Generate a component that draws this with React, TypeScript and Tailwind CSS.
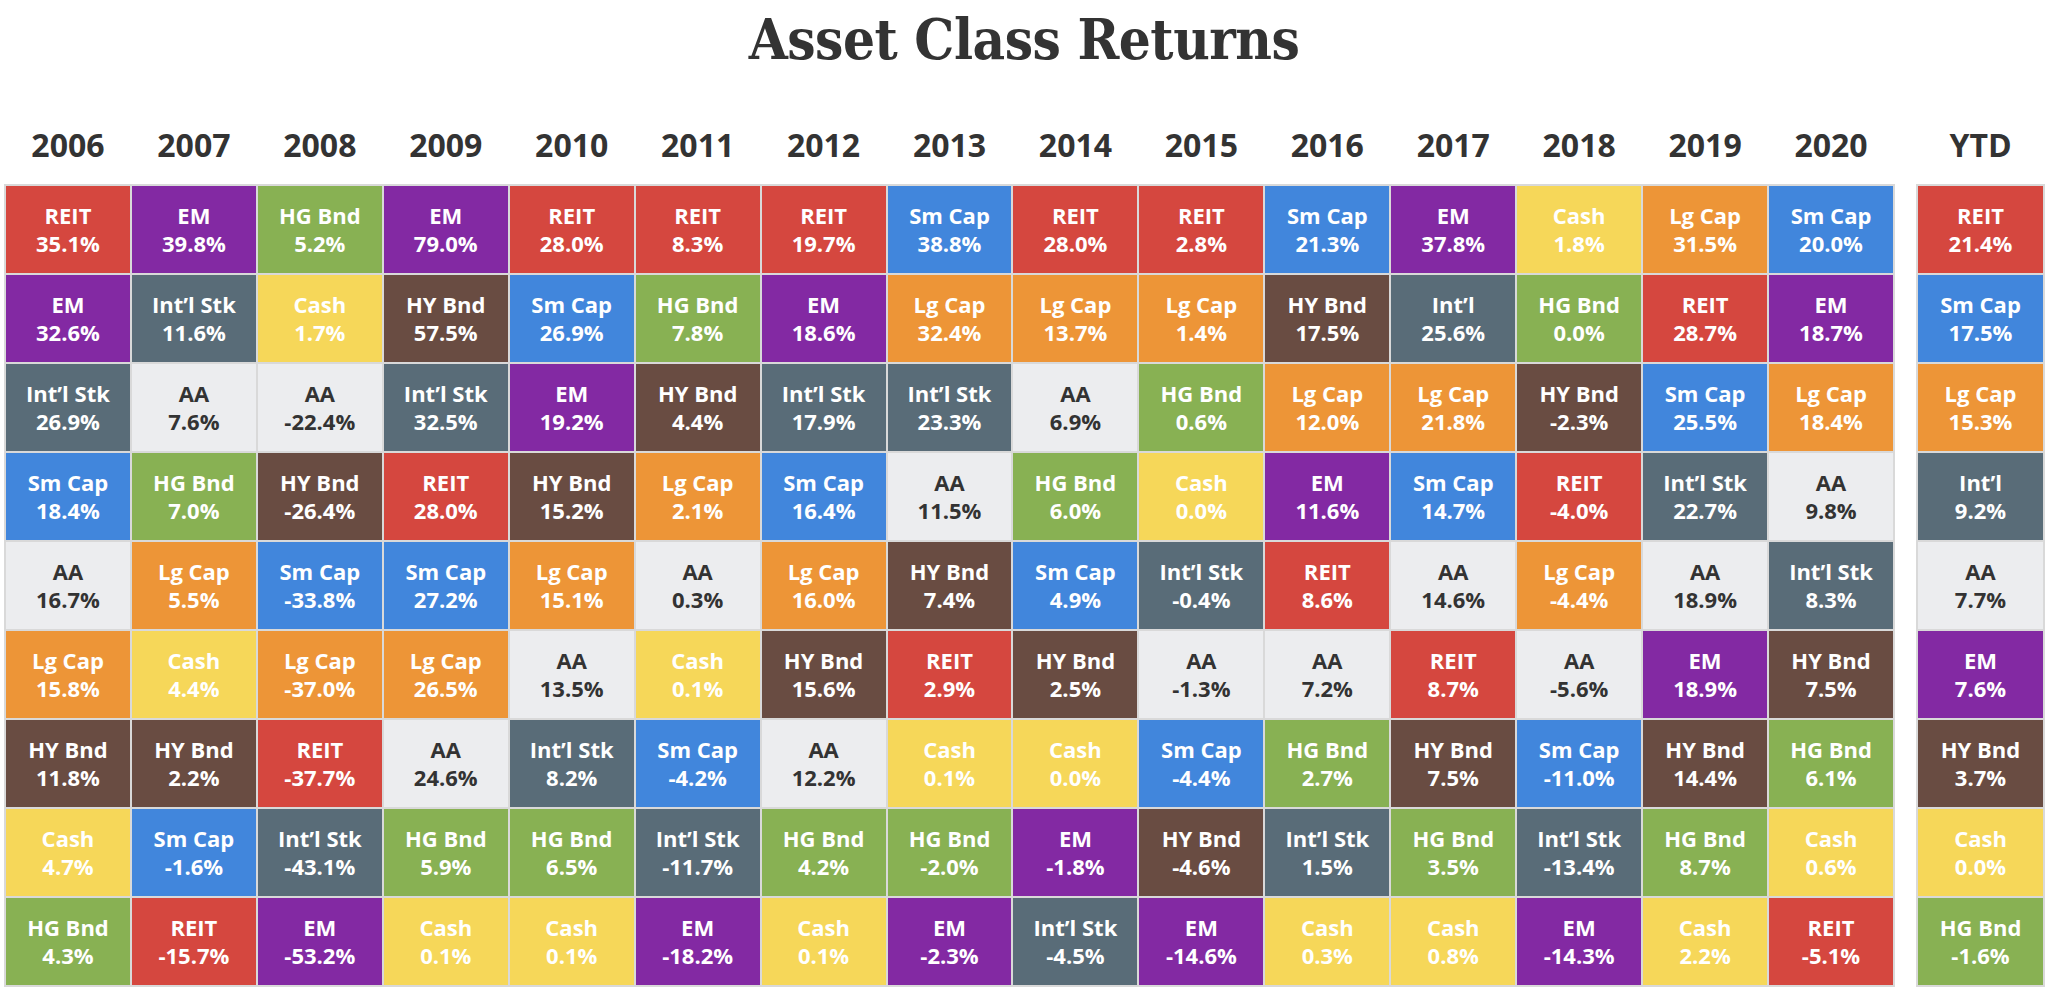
const COLORS: Record<string, string> = {
  "REIT": "bg-[#d5473f] text-white",
  "EM": "bg-[#8329a3] text-white",
  "HG Bnd": "bg-[#88b153] text-white",
  "Cash": "bg-[#f6d759] text-white",
  "Int’l Stk": "bg-[#596c78] text-white",
  "Int’l": "bg-[#596c78] text-white",
  "HY Bnd": "bg-[#694c42] text-white",
  "Sm Cap": "bg-[#4186dc] text-white",
  "Lg Cap": "bg-[#ed9537] text-white",
  "AA": "bg-[#ecedef] text-[#333333]",
};

type Cell = [string, string];

const years: { year: string; cells: Cell[] }[] = [
  { year: "2006", cells: [["REIT", "35.1%"], ["EM", "32.6%"], ["Int’l Stk", "26.9%"], ["Sm Cap", "18.4%"], ["AA", "16.7%"], ["Lg Cap", "15.8%"], ["HY Bnd", "11.8%"], ["Cash", "4.7%"], ["HG Bnd", "4.3%"]] },
  { year: "2007", cells: [["EM", "39.8%"], ["Int’l Stk", "11.6%"], ["AA", "7.6%"], ["HG Bnd", "7.0%"], ["Lg Cap", "5.5%"], ["Cash", "4.4%"], ["HY Bnd", "2.2%"], ["Sm Cap", "-1.6%"], ["REIT", "-15.7%"]] },
  { year: "2008", cells: [["HG Bnd", "5.2%"], ["Cash", "1.7%"], ["AA", "-22.4%"], ["HY Bnd", "-26.4%"], ["Sm Cap", "-33.8%"], ["Lg Cap", "-37.0%"], ["REIT", "-37.7%"], ["Int’l Stk", "-43.1%"], ["EM", "-53.2%"]] },
  { year: "2009", cells: [["EM", "79.0%"], ["HY Bnd", "57.5%"], ["Int’l Stk", "32.5%"], ["REIT", "28.0%"], ["Sm Cap", "27.2%"], ["Lg Cap", "26.5%"], ["AA", "24.6%"], ["HG Bnd", "5.9%"], ["Cash", "0.1%"]] },
  { year: "2010", cells: [["REIT", "28.0%"], ["Sm Cap", "26.9%"], ["EM", "19.2%"], ["HY Bnd", "15.2%"], ["Lg Cap", "15.1%"], ["AA", "13.5%"], ["Int’l Stk", "8.2%"], ["HG Bnd", "6.5%"], ["Cash", "0.1%"]] },
  { year: "2011", cells: [["REIT", "8.3%"], ["HG Bnd", "7.8%"], ["HY Bnd", "4.4%"], ["Lg Cap", "2.1%"], ["AA", "0.3%"], ["Cash", "0.1%"], ["Sm Cap", "-4.2%"], ["Int’l Stk", "-11.7%"], ["EM", "-18.2%"]] },
  { year: "2012", cells: [["REIT", "19.7%"], ["EM", "18.6%"], ["Int’l Stk", "17.9%"], ["Sm Cap", "16.4%"], ["Lg Cap", "16.0%"], ["HY Bnd", "15.6%"], ["AA", "12.2%"], ["HG Bnd", "4.2%"], ["Cash", "0.1%"]] },
  { year: "2013", cells: [["Sm Cap", "38.8%"], ["Lg Cap", "32.4%"], ["Int’l Stk", "23.3%"], ["AA", "11.5%"], ["HY Bnd", "7.4%"], ["REIT", "2.9%"], ["Cash", "0.1%"], ["HG Bnd", "-2.0%"], ["EM", "-2.3%"]] },
  { year: "2014", cells: [["REIT", "28.0%"], ["Lg Cap", "13.7%"], ["AA", "6.9%"], ["HG Bnd", "6.0%"], ["Sm Cap", "4.9%"], ["HY Bnd", "2.5%"], ["Cash", "0.0%"], ["EM", "-1.8%"], ["Int’l Stk", "-4.5%"]] },
  { year: "2015", cells: [["REIT", "2.8%"], ["Lg Cap", "1.4%"], ["HG Bnd", "0.6%"], ["Cash", "0.0%"], ["Int’l Stk", "-0.4%"], ["AA", "-1.3%"], ["Sm Cap", "-4.4%"], ["HY Bnd", "-4.6%"], ["EM", "-14.6%"]] },
  { year: "2016", cells: [["Sm Cap", "21.3%"], ["HY Bnd", "17.5%"], ["Lg Cap", "12.0%"], ["EM", "11.6%"], ["REIT", "8.6%"], ["AA", "7.2%"], ["HG Bnd", "2.7%"], ["Int’l Stk", "1.5%"], ["Cash", "0.3%"]] },
  { year: "2017", cells: [["EM", "37.8%"], ["Int’l", "25.6%"], ["Lg Cap", "21.8%"], ["Sm Cap", "14.7%"], ["AA", "14.6%"], ["REIT", "8.7%"], ["HY Bnd", "7.5%"], ["HG Bnd", "3.5%"], ["Cash", "0.8%"]] },
  { year: "2018", cells: [["Cash", "1.8%"], ["HG Bnd", "0.0%"], ["HY Bnd", "-2.3%"], ["REIT", "-4.0%"], ["Lg Cap", "-4.4%"], ["AA", "-5.6%"], ["Sm Cap", "-11.0%"], ["Int’l Stk", "-13.4%"], ["EM", "-14.3%"]] },
  { year: "2019", cells: [["Lg Cap", "31.5%"], ["REIT", "28.7%"], ["Sm Cap", "25.5%"], ["Int’l Stk", "22.7%"], ["AA", "18.9%"], ["EM", "18.9%"], ["HY Bnd", "14.4%"], ["HG Bnd", "8.7%"], ["Cash", "2.2%"]] },
  { year: "2020", cells: [["Sm Cap", "20.0%"], ["EM", "18.7%"], ["Lg Cap", "18.4%"], ["AA", "9.8%"], ["Int’l Stk", "8.3%"], ["HY Bnd", "7.5%"], ["HG Bnd", "6.1%"], ["Cash", "0.6%"], ["REIT", "-5.1%"]] },
];

const ytd: Cell[] = [["REIT", "21.4%"], ["Sm Cap", "17.5%"], ["Lg Cap", "15.3%"], ["Int’l", "9.2%"], ["AA", "7.7%"], ["EM", "7.6%"], ["HY Bnd", "3.7%"], ["Cash", "0.0%"], ["HG Bnd", "-1.6%"]];

function ReturnCell({ cell }: { cell: Cell }) {
  const [name, value] = cell;
  return (
    <div className={`h-[87px] flex flex-col items-center justify-center pb-[2px] text-[22px] leading-[28px] font-bold ${COLORS[name]}`}>
      <span>{name}</span>
      <span>{value}</span>
    </div>
  );
}

function Column({ cells }: { cells: Cell[] }) {
  return (
    <div className="flex flex-col gap-[2px]">
      {cells.map((c, i) => (
        <ReturnCell key={i} cell={c} />
      ))}
    </div>
  );
}

export default function App() {
  return (
    <div className="w-[2048px] h-[991px] bg-white text-[#333333] font-['Open_Sans',sans-serif] overflow-hidden">
      <h1 className="h-[78px] flex items-center justify-center font-['DejaVu_Serif_Condensed','DejaVu_Serif',serif] [font-stretch:condensed] font-bold text-[56px] leading-none tracking-[-0.5px]">
        Asset Class Returns
      </h1>
      <div className="flex pl-[4px]">
        <div className="w-[1891px]">
          <div className="grid grid-cols-15 px-[2px] gap-[2px] h-[106px] items-center">
            {years.map((y) => (
              <div key={y.year} className="text-center text-[32px] font-bold leading-none pt-[28px]">
                {y.year}
              </div>
            ))}
          </div>
          <div className="grid grid-cols-15 gap-[2px] p-[2px] bg-[#d9d9d9]">
            {years.map((y) => (
              <Column key={y.year} cells={y.cells} />
            ))}
          </div>
        </div>
        <div className="w-[129px] ml-[21px]">
          <div className="h-[106px] flex items-center justify-center text-[32px] font-bold leading-none pt-[28px]">
            YTD
          </div>
          <div className="p-[2px] bg-[#d9d9d9]">
            <Column cells={ytd} />
          </div>
        </div>
      </div>
    </div>
  );
}
